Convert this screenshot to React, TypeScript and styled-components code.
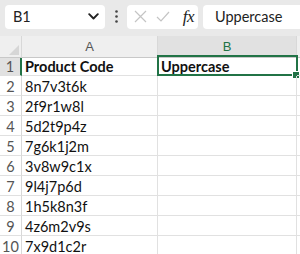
import React, { FC } from 'react';
import styled, { createGlobalStyle } from 'styled-components';

const GlobalStyle = createGlobalStyle`
    html, body {
        margin: 0;
        padding: 0;
        background: #ffffff;
        overflow: hidden;
    }
    * {
        box-sizing: border-box;
    }
`;

const Page = styled.div`
    width: 300px;
    height: 254px;
    overflow: hidden;
    font-family: Lato, 'Noto Sans', sans-serif;
`;

const Toolbar = styled.div`
    height: 36px;
    background: #e9e9e9;
    display: flex;
    align-items: center;
    padding: 0 0 3px 5px;
`;

const NameBox = styled.div`
    width: 100px;
    height: 24px;
    background: #ffffff;
    border-radius: 4px;
    display: flex;
    align-items: center;
    justify-content: space-between;
    padding: 0 6px 0 8px;
    font-size: 14.5px;
    color: #222;
`;

const Dots = styled.div`
    width: 22px;
    display: flex;
    justify-content: center;
`;

const ButtonGroup = styled.div`
    width: 71px;
    height: 24px;
    background: #ffffff;
    border-radius: 4px;
    display: flex;
    align-items: center;
    padding: 0 4px 0 7px;
    gap: 9px;
`;

const Fx = styled.span`
    font-family: 'Liberation Serif', 'DejaVu Serif', serif;
    font-style: italic;
    font-size: 17px;
    color: #222;
    margin-left: auto;
    letter-spacing: -0.5px;
    line-height: 1;
`;

const FormulaBox = styled.div`
    flex: 1;
    height: 24px;
    margin-left: 5px;
    background: #ffffff;
    border-radius: 4px 0 0 4px;
    display: flex;
    align-items: center;
    padding-left: 12px;
    font-size: 14.5px;
    color: #222;
`;

const Grid = styled.div`
    display: grid;
    grid-template-columns: 22px 136px 139px 20px;
    grid-auto-rows: 20px;
`;

const Corner = styled.div`
    height: 22px;
    background: #efefef;
    border-right: 1px solid #d8d8d8;
    border-bottom: 1px solid #c8c8c8;
    position: relative;
    &::after {
        content: '';
        position: absolute;
        right: 2px;
        bottom: 2px;
        border-style: solid;
        border-width: 0 0 10px 10px;
        border-color: transparent transparent #d6d6d6 transparent;
    }
`;

const ColHeader = styled.div<{ $active?: boolean }>`
    height: 22px;
    background: ${({ $active }) => ($active ? '#e1e1e1' : '#efefef')};
    border-right: 1px solid #d8d8d8;
    border-bottom: 1px solid #c8c8c8;
    display: flex;
    align-items: center;
    justify-content: center;
    font-family: 'Liberation Sans', Arial, sans-serif;
    font-size: 13px;
    color: ${({ $active }) => ($active ? '#217346' : '#555')};
`;

const RowHeader = styled.div<{ $active?: boolean }>`
    background: ${({ $active }) => ($active ? '#e1e1e1' : '#ffffff')};
    border-right: ${({ $active }) => ($active ? '2px solid #217346' : '1px solid #d8d8d8')};
    border-bottom: 1px solid #e0e0e0;
    display: flex;
    align-items: center;
    justify-content: center;
    padding-top: 1px;
    font-size: 14.5px;
    color: #555;
`;

const Cell = styled.div<{ $bold?: boolean; $selected?: boolean }>`
    position: relative;
    border-right: 1px solid #e1e1e1;
    border-bottom: 1px solid #e1e1e1;
    display: flex;
    align-items: center;
    padding: 1px 0 0 3px;
    font-size: 14.5px;
    font-weight: ${({ $bold }) => ($bold ? 700 : 400)};
    color: #111;
    white-space: nowrap;
    ${({ $selected }) =>
        $selected &&
        `
        &::before {
            content: '';
            position: absolute;
            left: -1px;
            top: -1px;
            right: -2px;
            bottom: -1px;
            border: 2px solid #217346;
        }
        &::after {
            content: '';
            position: absolute;
            right: -4px;
            bottom: -4px;
            width: 6px;
            height: 6px;
            background: #217346;
            border: 1px solid #ffffff;
        }
    `}
`;

const codes = [
    '8n7v3t6k',
    '2f9r1w8l',
    '5d2t9p4z',
    '7g6k1j2m',
    '3v8w9c1x',
    '9l4j7p6d',
    '1h5k8n3f',
    '4z6m2v9s',
    '7x9d1c2r',
];

const Chevron: FC = () => (
    <svg width="11" height="7" viewBox="0 0 11 7">
        <path d="M1.2 1.2l4.3 4.3 4.3-4.3" fill="none" stroke="#222" strokeWidth="1.9" strokeLinecap="round" strokeLinejoin="round" />
    </svg>
);

const App: FC = () => {
    return (
        <Page>
            <GlobalStyle />
            <Toolbar>
                <NameBox>
                    B1
                    <Chevron />
                </NameBox>
                <Dots>
                    <svg width="3" height="13" viewBox="0 0 3 13">
                        <circle cx="1.5" cy="1.5" r="1.3" fill="#444" />
                        <circle cx="1.5" cy="6.5" r="1.3" fill="#444" />
                        <circle cx="1.5" cy="11.5" r="1.3" fill="#444" />
                    </svg>
                </Dots>
                <ButtonGroup>
                    <svg width="13" height="13" viewBox="0 0 13 13">
                        <path d="M1 1l11 11M12 1L1 12" stroke="#c4c4c4" strokeWidth="1.2" />
                    </svg>
                    <svg width="14" height="11" viewBox="0 0 14 11">
                        <path d="M1 6l4 4 8-9" fill="none" stroke="#c4c4c4" strokeWidth="1.2" />
                    </svg>
                    <Fx>fx</Fx>
                </ButtonGroup>
                <FormulaBox>Uppercase</FormulaBox>
            </Toolbar>
            <Grid>
                <Corner />
                <ColHeader>A</ColHeader>
                <ColHeader $active>B</ColHeader>
                <ColHeader />
                <RowHeader $active>1</RowHeader>
                <Cell $bold>Product Code</Cell>
                <Cell $bold $selected>
                    Uppercase
                </Cell>
                <Cell />
                {codes.map((code, i) => (
                    <React.Fragment key={code}>
                        <RowHeader>{i + 2}</RowHeader>
                        <Cell>{code}</Cell>
                        <Cell />
                        <Cell />
                    </React.Fragment>
                ))}
            </Grid>
        </Page>
    );
};

export default App;
